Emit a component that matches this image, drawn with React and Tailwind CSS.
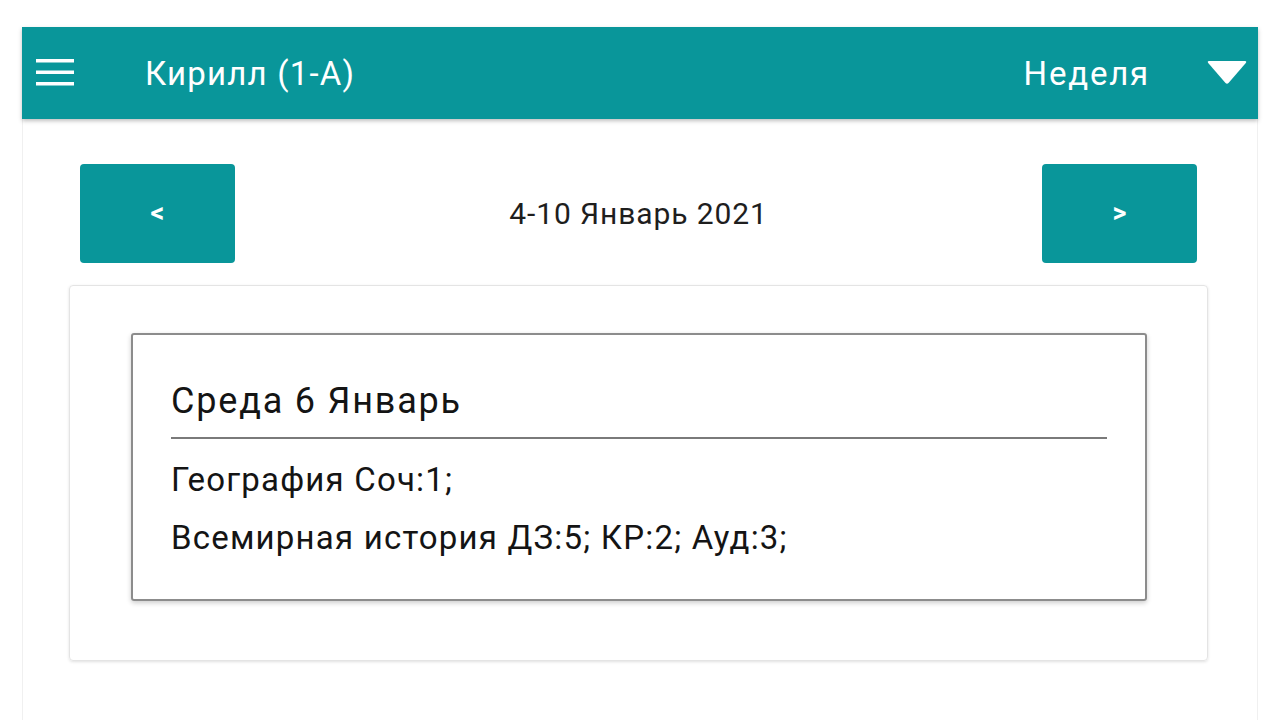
export default function App() {
  const font = { fontFamily: 'Roboto, "Noto Sans", sans-serif' };
  return (
    <div className="w-[1280px] h-[720px] bg-white overflow-hidden" style={font}>
      <div className="ml-[22px] w-[1236px] pt-[27px]">
        <header className="relative z-10 h-[92px] bg-[#09969a] flex items-center shadow-[0_2px_4px_rgba(0,0,0,0.25)] text-white">
          <svg className="ml-[14px]" width="38" height="30" viewBox="0 0 38 30">
            <rect x="0" y="1" width="38" height="3.5" fill="#fff" />
            <rect x="0" y="12.5" width="38" height="3.5" fill="#fff" />
            <rect x="0" y="24" width="38" height="3.5" fill="#fff" />
          </svg>
          <div className="ml-[71px] text-[33px] leading-none tracking-[1.2px]">Кирилл (1-А)</div>
          <div className="ml-auto text-[33px] leading-none tracking-[1.8px]">Неделя</div>
          <svg className="ml-[57px] mr-[11px] mt-[-2px]" width="40" height="25" viewBox="0 0 40 25">
            <path d="M2 1 L38 1 Q40 1 38.8 3 L21.5 23 Q20 24.5 18.5 23 L1.2 3 Q0 1 2 1 Z" fill="#fff" />
          </svg>
        </header>
        <div className="h-[601px] border-x border-[#f0f0f0]">
          <div className="ml-[57px] w-[1117px] pt-[45px] flex items-center">
            <button className="w-[155px] h-[99px] rounded-[4px] bg-[#09969a] text-white font-bold text-[27px] leading-none flex items-center justify-center">&lt;</button>
            <div className="flex-1 text-center text-[30px] text-[#1e1e1e] leading-none tracking-[0.9px]">4-10 Январь 2021</div>
            <button className="w-[155px] h-[99px] rounded-[4px] bg-[#09969a] text-white font-bold text-[27px] leading-none flex items-center justify-center">&gt;</button>
          </div>
          <div className="ml-[46px] mt-[22px] w-[1139px] h-[376px] rounded-[4px] border border-[#e4e4e4] shadow-[0_1px_3px_rgba(0,0,0,0.12)] pt-[47px] pl-[61px]">
            <div className="w-[1016px] h-[268px] rounded-[3px] border-2 border-[#8c8c8c] shadow-[0_2px_5px_rgba(0,0,0,0.2)] px-[38px] pt-[41px] text-[#141414]">
              <div className="text-[36px] leading-[50px] h-[50px] tracking-[1.8px]">Среда 6 Январь</div>
              <div className="mt-[11px] h-[2px] bg-[#7a7a7a]" />
              <div className="mt-[12px] text-[33px] leading-[58px] tracking-[1.2px]">География Соч:1;</div>
              <div className="text-[33px] leading-[58px] tracking-[1.2px]">Всемирная история ДЗ:5; КР:2; Ауд:3;</div>
            </div>
          </div>
        </div>
      </div>
    </div>
  );
}
